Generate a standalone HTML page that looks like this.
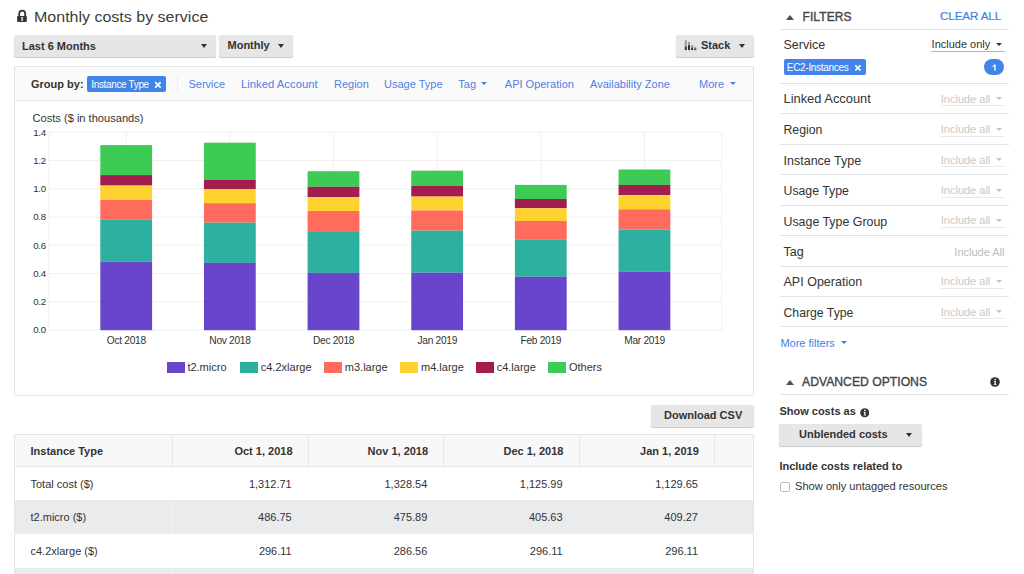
<!DOCTYPE html>
<html><head><meta charset="utf-8"><style>
html,body{margin:0;padding:0;width:1024px;height:574px;overflow:hidden;background:#fff;position:relative;font-family:"Liberation Sans",sans-serif;}
.t{position:absolute;white-space:nowrap;line-height:1;}
</style></head><body>
<svg style="position:absolute;left:0;top:0" width="40" height="30" viewBox="0 0 40 30">
<path d="M19.2 16.5 V13.7 A3.0 3.0 0 0 1 25.2 13.7 V16.5" fill="none" stroke="#333" stroke-width="1.8"/>
<rect x="17.1" y="15.9" width="9.7" height="6" rx="0.8" fill="#333"/>
<rect x="21.5" y="17.4" width="1.2" height="3.0" fill="#fff"/>
<rect x="21.1" y="17.1" width="2.0" height="0.8" fill="#fff"/>
<rect x="21.1" y="19.8" width="2.0" height="0.8" fill="#fff"/>
</svg>
<div class="t" style="left:34.00px;top:8.66px;font-size:16px;color:#3c3c3c;transform:scaleY(0.93);transform-origin:0 13.54px;">Monthly costs by service</div>
<div style="position:absolute;left:14px;top:35px;width:202px;height:22px;background:#e6e6e6;border-radius:2px;box-shadow:0 1px 1px 0 rgba(0,28,36,.22),1px 1px 1px -1px rgba(0,28,36,.08),-1px 1px 1px -1px rgba(0,28,36,.08);"></div>
<div class="t" style="left:22.00px;top:40.69px;font-size:11px;color:#333;font-weight:bold;">Last 6 Months</div>
<div style="position:absolute;left:200.5px;top:43.7px;width:0;height:0;border-left:3.5px solid transparent;border-right:3.5px solid transparent;border-top:4.3px solid #333;"></div>
<div style="position:absolute;left:219px;top:35px;width:74px;height:22px;background:#e6e6e6;border-radius:2px;box-shadow:0 1px 1px 0 rgba(0,28,36,.22),1px 1px 1px -1px rgba(0,28,36,.08),-1px 1px 1px -1px rgba(0,28,36,.08);"></div>
<div class="t" style="left:227.50px;top:40.29px;font-size:11px;color:#333;font-weight:bold;">Monthly</div>
<div style="position:absolute;left:277.6px;top:43.7px;width:0;height:0;border-left:3.5px solid transparent;border-right:3.5px solid transparent;border-top:4.3px solid #333;"></div>
<div style="position:absolute;left:676px;top:35px;width:78px;height:22px;background:#e6e6e6;border-radius:2px;box-shadow:0 1px 1px 0 rgba(0,28,36,.22),1px 1px 1px -1px rgba(0,28,36,.08),-1px 1px 1px -1px rgba(0,28,36,.08);"></div>
<svg style="position:absolute;left:680px;top:36px" width="20" height="18" viewBox="0 0 20 18">
<rect x="4.8" y="4.2" width="2" height="6.6" fill="#9a9a9a"/><rect x="4.8" y="10.6" width="2" height="3.5" fill="#333"/>
<rect x="8.0" y="6.0" width="2" height="3.2" fill="#9a9a9a"/><rect x="8.0" y="9.1" width="2" height="5" fill="#333"/>
<rect x="11.1" y="9.1" width="2" height="2.6" fill="#9a9a9a"/><rect x="11.1" y="11.6" width="2" height="2.5" fill="#333"/>
<rect x="14.2" y="10.7" width="2.1" height="1.9" fill="#a5a5a5"/><rect x="14.2" y="12.5" width="2.1" height="1.6" fill="#333"/>
</svg>
<div class="t" style="left:701.00px;top:39.99px;font-size:11px;color:#333;font-weight:bold;">Stack</div>
<div style="position:absolute;left:739.2px;top:43.9px;width:0;height:0;border-left:3.5px solid transparent;border-right:3.5px solid transparent;border-top:4.3px solid #333;"></div>
<div style="position:absolute;left:14px;top:66px;width:740px;height:330px;box-sizing:border-box;border:1px solid #e3e6e6;background:#fff;"></div>
<div style="position:absolute;left:15px;top:67px;width:738px;height:33px;background:#fafafa;border-bottom:1px solid #e6e8e8;"></div>
<div class="t" style="left:31.00px;top:78.69px;font-size:11px;color:#333;font-weight:bold;">Group by:</div>
<div style="position:absolute;left:86.8px;top:76.2px;width:79px;height:15.7px;background:#4185ea;border-radius:2px;"></div>
<div class="t" style="left:91.30px;top:79.73px;font-size:10px;color:#fff;letter-spacing:-0.35px;">Instance Type</div>
<svg style="position:absolute;left:154px;top:80.8px" width="8" height="8" viewBox="0 0 8 8"><path d="M1.2 1.2 L6.6 6.6 M6.6 1.2 L1.2 6.6" stroke="#fff" stroke-width="1.7"/></svg>
<div style="position:absolute;left:177px;top:75px;width:1px;height:18px;background:#ebeded;"></div>
<div class="t" style="left:188.50px;top:79.39px;font-size:11px;color:#5080e2;">Service</div>
<div class="t" style="left:241.00px;top:79.13px;font-size:11.3px;color:#5080e2;">Linked Account</div>
<div class="t" style="left:334.00px;top:79.39px;font-size:11px;color:#5080e2;">Region</div>
<div class="t" style="left:384.00px;top:79.39px;font-size:11px;color:#5080e2;">Usage Type</div>
<div class="t" style="left:458.30px;top:79.39px;font-size:11px;color:#5080e2;">Tag</div>
<div class="t" style="left:504.80px;top:79.39px;font-size:11px;color:#5080e2;">API Operation</div>
<div class="t" style="left:590.00px;top:79.39px;font-size:11px;color:#5080e2;">Availability Zone</div>
<div class="t" style="left:699.00px;top:79.39px;font-size:11px;color:#5080e2;">More</div>
<div style="position:absolute;left:480.5px;top:82.0px;width:0;height:0;border-left:3.0px solid transparent;border-right:3.0px solid transparent;border-top:3.9px solid #5080e2;"></div>
<div style="position:absolute;left:729.5px;top:82.0px;width:0;height:0;border-left:3.0px solid transparent;border-right:3.0px solid transparent;border-top:3.9px solid #5080e2;"></div>
<svg style="position:absolute;left:0;top:0" width="1024" height="574" viewBox="0 0 1024 574">
<rect x="48.6" y="131.70" width="673" height="1" fill="#f0f0f0"/>
<rect x="48.6" y="159.95" width="673" height="1" fill="#f0f0f0"/>
<rect x="48.6" y="188.20" width="673" height="1" fill="#f0f0f0"/>
<rect x="48.6" y="216.45" width="673" height="1" fill="#f0f0f0"/>
<rect x="48.6" y="244.70" width="673" height="1" fill="#f0f0f0"/>
<rect x="48.6" y="272.95" width="673" height="1" fill="#f0f0f0"/>
<rect x="48.6" y="301.20" width="673" height="1" fill="#f0f0f0"/>
<rect x="48.6" y="329.45" width="673" height="1" fill="#f0f0f0"/>
<rect x="48.4" y="132" width="1" height="198" fill="#f0f0f0"/>
<rect x="721.2" y="132" width="1" height="198" fill="#f0f0f0"/>
<rect x="125.80" y="132" width="1" height="198" fill="#f0f0f0"/>
<rect x="229.45" y="132" width="1" height="198" fill="#f0f0f0"/>
<rect x="333.10" y="132" width="1" height="198" fill="#f0f0f0"/>
<rect x="436.75" y="132" width="1" height="198" fill="#f0f0f0"/>
<rect x="540.40" y="132" width="1" height="198" fill="#f0f0f0"/>
<rect x="644.05" y="132" width="1" height="198" fill="#f0f0f0"/>
<rect x="100.30" y="145.10" width="51.8" height="30.00" fill="#3ecb55"/>
<rect x="100.30" y="175.10" width="51.8" height="10.50" fill="#a21d50"/>
<rect x="100.30" y="185.60" width="51.8" height="14.40" fill="#fed330"/>
<rect x="100.30" y="200.00" width="51.8" height="19.80" fill="#ff6b5d"/>
<rect x="100.30" y="219.80" width="51.8" height="41.90" fill="#2db0a0"/>
<rect x="100.30" y="261.70" width="51.8" height="68.50" fill="#6945cb"/>
<rect x="203.95" y="142.70" width="51.8" height="37.10" fill="#3ecb55"/>
<rect x="203.95" y="179.80" width="51.8" height="9.50" fill="#a21d50"/>
<rect x="203.95" y="189.30" width="51.8" height="13.90" fill="#fed330"/>
<rect x="203.95" y="203.20" width="51.8" height="19.50" fill="#ff6b5d"/>
<rect x="203.95" y="222.70" width="51.8" height="40.20" fill="#2db0a0"/>
<rect x="203.95" y="262.90" width="51.8" height="67.30" fill="#6945cb"/>
<rect x="307.60" y="171.20" width="51.8" height="15.60" fill="#3ecb55"/>
<rect x="307.60" y="186.80" width="51.8" height="10.30" fill="#a21d50"/>
<rect x="307.60" y="197.10" width="51.8" height="13.90" fill="#fed330"/>
<rect x="307.60" y="211.00" width="51.8" height="20.20" fill="#ff6b5d"/>
<rect x="307.60" y="231.20" width="51.8" height="41.70" fill="#2db0a0"/>
<rect x="307.60" y="272.90" width="51.8" height="57.30" fill="#6945cb"/>
<rect x="411.25" y="170.70" width="51.8" height="15.20" fill="#3ecb55"/>
<rect x="411.25" y="185.90" width="51.8" height="10.70" fill="#a21d50"/>
<rect x="411.25" y="196.60" width="51.8" height="13.90" fill="#fed330"/>
<rect x="411.25" y="210.50" width="51.8" height="20.20" fill="#ff6b5d"/>
<rect x="411.25" y="230.70" width="51.8" height="42.00" fill="#2db0a0"/>
<rect x="411.25" y="272.70" width="51.8" height="57.50" fill="#6945cb"/>
<rect x="514.90" y="184.90" width="51.8" height="14.10" fill="#3ecb55"/>
<rect x="514.90" y="199.00" width="51.8" height="9.30" fill="#a21d50"/>
<rect x="514.90" y="208.30" width="51.8" height="12.70" fill="#fed330"/>
<rect x="514.90" y="221.00" width="51.8" height="18.30" fill="#ff6b5d"/>
<rect x="514.90" y="239.30" width="51.8" height="37.50" fill="#2db0a0"/>
<rect x="514.90" y="276.80" width="51.8" height="53.40" fill="#6945cb"/>
<rect x="618.55" y="169.50" width="51.8" height="15.40" fill="#3ecb55"/>
<rect x="618.55" y="184.90" width="51.8" height="10.20" fill="#a21d50"/>
<rect x="618.55" y="195.10" width="51.8" height="14.20" fill="#fed330"/>
<rect x="618.55" y="209.30" width="51.8" height="20.20" fill="#ff6b5d"/>
<rect x="618.55" y="229.50" width="51.8" height="42.00" fill="#2db0a0"/>
<rect x="618.55" y="271.50" width="51.8" height="58.70" fill="#6945cb"/>
</svg>
<div class="t" style="left:32.50px;top:112.50px;font-size:11.1px;color:#333;">Costs ($ in thousands)</div>
<div class="t" style="left:33.20px;top:127.74px;font-size:9.7px;color:#333;letter-spacing:-0.3px;">1.4</div>
<div class="t" style="left:33.20px;top:155.99px;font-size:9.7px;color:#333;letter-spacing:-0.3px;">1.2</div>
<div class="t" style="left:33.20px;top:184.24px;font-size:9.7px;color:#333;letter-spacing:-0.3px;">1.0</div>
<div class="t" style="left:33.20px;top:212.49px;font-size:9.7px;color:#333;letter-spacing:-0.3px;">0.8</div>
<div class="t" style="left:33.20px;top:240.74px;font-size:9.7px;color:#333;letter-spacing:-0.3px;">0.6</div>
<div class="t" style="left:33.20px;top:268.99px;font-size:9.7px;color:#333;letter-spacing:-0.3px;">0.4</div>
<div class="t" style="left:33.20px;top:297.24px;font-size:9.7px;color:#333;letter-spacing:-0.3px;">0.2</div>
<div class="t" style="left:33.20px;top:325.49px;font-size:9.7px;color:#333;letter-spacing:-0.3px;">0.0</div>
<div class="t" style="left:76.30px;width:100px;text-align:center;top:336.17px;font-size:10.2px;letter-spacing:-0.3px;color:#333">Oct 2018</div>
<div class="t" style="left:179.95px;width:100px;text-align:center;top:336.17px;font-size:10.2px;letter-spacing:-0.3px;color:#333">Nov 2018</div>
<div class="t" style="left:283.60px;width:100px;text-align:center;top:336.17px;font-size:10.2px;letter-spacing:-0.3px;color:#333">Dec 2018</div>
<div class="t" style="left:387.25px;width:100px;text-align:center;top:336.17px;font-size:10.2px;letter-spacing:-0.3px;color:#333">Jan 2019</div>
<div class="t" style="left:490.90px;width:100px;text-align:center;top:336.17px;font-size:10.2px;letter-spacing:-0.3px;color:#333">Feb 2019</div>
<div class="t" style="left:594.55px;width:100px;text-align:center;top:336.17px;font-size:10.2px;letter-spacing:-0.3px;color:#333">Mar 2019</div>
<div style="position:absolute;left:166.8px;top:361.6px;width:17.8px;height:11.5px;background:#6945cb;"></div>
<div class="t" style="left:187.40px;top:361.99px;font-size:11px;color:#333;">t2.micro</div>
<div style="position:absolute;left:240.20000000000002px;top:361.6px;width:17.8px;height:11.5px;background:#2db0a0;"></div>
<div class="t" style="left:260.80px;top:361.99px;font-size:11px;color:#333;">c4.2xlarge</div>
<div style="position:absolute;left:324.2px;top:361.6px;width:17.8px;height:11.5px;background:#ff6b5d;"></div>
<div class="t" style="left:344.80px;top:361.99px;font-size:11px;color:#333;">m3.large</div>
<div style="position:absolute;left:400.4px;top:361.6px;width:17.8px;height:11.5px;background:#fed330;"></div>
<div class="t" style="left:421.00px;top:361.99px;font-size:11px;color:#333;">m4.large</div>
<div style="position:absolute;left:476.09999999999997px;top:361.6px;width:17.8px;height:11.5px;background:#a21d50;"></div>
<div class="t" style="left:496.70px;top:361.99px;font-size:11px;color:#333;">c4.large</div>
<div style="position:absolute;left:548.4px;top:361.6px;width:17.8px;height:11.5px;background:#3ecb55;"></div>
<div class="t" style="left:569.00px;top:361.99px;font-size:11px;color:#333;">Others</div>
<div style="position:absolute;left:651px;top:405px;width:103px;height:21.5px;background:#e6e6e6;border-radius:2px;box-shadow:0 1px 1px 0 rgba(0,28,36,.22),1px 1px 1px -1px rgba(0,28,36,.08),-1px 1px 1px -1px rgba(0,28,36,.08);"></div>
<div class="t" style="left:664.00px;top:410.39px;font-size:11px;color:#333;font-weight:bold;">Download CSV</div>
<div style="position:absolute;left:14px;top:434px;width:740px;height:140px;box-sizing:border-box;border:1px solid #e3e6e6;border-bottom:none;background:#fff;"></div>
<div style="position:absolute;left:15px;top:435px;width:738px;height:31px;background:#f8f8f8;border-bottom:1px solid #e6e8e8;"></div>
<div style="position:absolute;left:15px;top:500.3px;width:738px;height:33.7px;background:#e9ebed;"></div>
<div style="position:absolute;left:15px;top:567.5px;width:738px;height:7px;background:#e9ebed;"></div>
<div style="position:absolute;left:172px;top:500.3px;width:1px;height:33.7px;background:#f2f4f4;"></div>
<div style="position:absolute;left:172px;top:567.5px;width:1px;height:7px;background:#f2f4f4;"></div>
<div style="position:absolute;left:172px;top:435px;width:1px;height:31px;background:#e6e8e8;"></div>
<div style="position:absolute;left:308px;top:435px;width:1px;height:31px;background:#e6e8e8;"></div>
<div style="position:absolute;left:443.3px;top:435px;width:1px;height:31px;background:#e6e8e8;"></div>
<div style="position:absolute;left:578.8px;top:435px;width:1px;height:31px;background:#e6e8e8;"></div>
<div style="position:absolute;left:714px;top:435px;width:1px;height:31px;background:#e6e8e8;"></div>
<div class="t" style="left:30.50px;top:445.69px;font-size:11px;color:#333;font-weight:bold;">Instance Type</div>
<div class="t" style="right:731.50px;top:446.09px;font-size:11px;color:#333;font-weight:bold;">Oct 1, 2018</div>
<div class="t" style="right:595.90px;top:446.09px;font-size:11px;color:#333;font-weight:bold;">Nov 1, 2018</div>
<div class="t" style="right:460.60px;top:446.09px;font-size:11px;color:#333;font-weight:bold;">Dec 1, 2018</div>
<div class="t" style="right:325.20px;top:446.09px;font-size:11px;color:#333;font-weight:bold;">Jan 1, 2019</div>
<div class="t" style="left:30.50px;top:478.79px;font-size:11px;color:#333;">Total cost ($)</div>
<div class="t" style="right:732.30px;top:478.79px;font-size:11px;color:#333;">1,312.71</div>
<div class="t" style="right:596.70px;top:478.79px;font-size:11px;color:#333;">1,328.54</div>
<div class="t" style="right:461.40px;top:478.79px;font-size:11px;color:#333;">1,125.99</div>
<div class="t" style="right:326.00px;top:478.79px;font-size:11px;color:#333;">1,129.65</div>
<div class="t" style="left:30.50px;top:512.49px;font-size:11px;color:#333;">t2.micro ($)</div>
<div class="t" style="right:732.30px;top:512.49px;font-size:11px;color:#333;">486.75</div>
<div class="t" style="right:596.70px;top:512.49px;font-size:11px;color:#333;">475.89</div>
<div class="t" style="right:461.40px;top:512.49px;font-size:11px;color:#333;">405.63</div>
<div class="t" style="right:326.00px;top:512.49px;font-size:11px;color:#333;">409.27</div>
<div class="t" style="left:30.50px;top:546.19px;font-size:11px;color:#333;">c4.2xlarge ($)</div>
<div class="t" style="right:732.30px;top:546.19px;font-size:11px;color:#333;">296.11</div>
<div class="t" style="right:596.70px;top:546.19px;font-size:11px;color:#333;">286.56</div>
<div class="t" style="right:461.40px;top:546.19px;font-size:11px;color:#333;">296.11</div>
<div class="t" style="right:326.00px;top:546.19px;font-size:11px;color:#333;">296.11</div>
<div style="position:absolute;left:786.2px;top:14.6px;width:0;height:0;border-left:4.7px solid transparent;border-right:4.7px solid transparent;border-bottom:5.4px solid #4a4f55;"></div>
<div class="t" style="left:802.50px;top:10.84px;font-size:12px;color:#3f454b;letter-spacing:0.1px;-webkit-text-stroke:0.35px #3f454b;">FILTERS</div>
<div class="t" style="right:23.00px;top:10.28px;font-size:11.6px;color:#3b7fe6;letter-spacing:-0.1px;-webkit-text-stroke:0.2px #3b7fe6;">CLEAR ALL</div>
<div style="position:absolute;left:779.5px;top:29px;width:229.5px;height:1px;background:#dfe3e3;"></div>
<div class="t" style="left:783.50px;top:38.84px;font-size:12.47px;color:#333;">Service</div>
<div class="t" style="right:33.70px;top:39.09px;font-size:11px;color:#333;">Include only</div>
<div style="position:absolute;left:995.8px;top:43.2px;width:0;height:0;border-left:3.5px solid transparent;border-right:3.5px solid transparent;border-top:3.8px solid #333;"></div>
<div style="position:absolute;left:931px;top:51px;width:73.5px;height:1px;background:#b5b5b5;"></div>
<div style="position:absolute;left:784px;top:59.2px;width:82px;height:15.6px;background:#4185ea;border-radius:2px;"></div>
<div class="t" style="left:786.80px;top:62.73px;font-size:10px;color:#fff;letter-spacing:-0.3px;">EC2-Instances</div>
<svg style="position:absolute;left:854px;top:63.8px" width="8" height="8" viewBox="0 0 8 8"><path d="M1.3 1.3 L6.5 6.5 M6.5 1.3 L1.3 6.5" stroke="#fff" stroke-width="1.7"/></svg>
<div style="position:absolute;left:983.6px;top:59.2px;width:20.6px;height:15.6px;background:#4185ea;border-radius:8px;"></div>
<svg style="position:absolute;left:990px;top:62px" width="8" height="10" viewBox="0 0 8 10"><path d="M4.3 2.6 H5.7 V8.7 H4.3 V4.3 Q3.6 4.9 2.5 5.0 V3.9 Q3.9 3.6 4.3 2.6 Z" fill="#fff"/></svg>
<div style="position:absolute;left:779.5px;top:82.7px;width:229.5px;height:1px;background:#dfe3e3;"></div>
<div style="position:absolute;left:779.5px;top:113.1px;width:229.5px;height:1px;background:#dfe3e3;"></div>
<div style="position:absolute;left:779.5px;top:143.8px;width:229.5px;height:1px;background:#dfe3e3;"></div>
<div style="position:absolute;left:779.5px;top:174.2px;width:229.5px;height:1px;background:#dfe3e3;"></div>
<div style="position:absolute;left:779.5px;top:204.6px;width:229.5px;height:1px;background:#dfe3e3;"></div>
<div style="position:absolute;left:779.5px;top:235.1px;width:229.5px;height:1px;background:#dfe3e3;"></div>
<div style="position:absolute;left:779.5px;top:265.5px;width:229.5px;height:1px;background:#dfe3e3;"></div>
<div style="position:absolute;left:779.5px;top:295.9px;width:229.5px;height:1px;background:#dfe3e3;"></div>
<div style="position:absolute;left:779.5px;top:326.4px;width:229.5px;height:1px;background:#dfe3e3;"></div>
<div class="t" style="left:783.50px;top:93.20px;font-size:12.88px;color:#333;">Linked Account</div>
<div class="t" style="right:33.70px;top:93.59px;font-size:11px;color:#c8c8c8;">Include all</div>
<div style="position:absolute;left:996px;top:97.1px;width:0;height:0;border-left:3.0px solid transparent;border-right:3.0px solid transparent;border-top:3.2px solid #c4c4c4;"></div>
<div style="position:absolute;left:940.7px;top:105.2px;width:63.7px;height:1px;background:#e8e8e8;"></div>
<div class="t" style="left:783.50px;top:124.11px;font-size:12.27px;color:#333;">Region</div>
<div class="t" style="right:33.70px;top:123.99px;font-size:11px;color:#c8c8c8;">Include all</div>
<div style="position:absolute;left:996px;top:127.5px;width:0;height:0;border-left:3.0px solid transparent;border-right:3.0px solid transparent;border-top:3.2px solid #c4c4c4;"></div>
<div style="position:absolute;left:940.7px;top:135.6px;width:63.7px;height:1px;background:#e8e8e8;"></div>
<div class="t" style="left:783.50px;top:154.59px;font-size:12.53px;color:#333;">Instance Type</div>
<div class="t" style="right:33.70px;top:154.69px;font-size:11px;color:#c8c8c8;">Include all</div>
<div style="position:absolute;left:996px;top:158.20000000000002px;width:0;height:0;border-left:3.0px solid transparent;border-right:3.0px solid transparent;border-top:3.2px solid #c4c4c4;"></div>
<div style="position:absolute;left:940.7px;top:166.3px;width:63.7px;height:1px;background:#e8e8e8;"></div>
<div class="t" style="left:783.50px;top:185.18px;font-size:12.31px;color:#333;">Usage Type</div>
<div class="t" style="right:33.70px;top:185.09px;font-size:11px;color:#c8c8c8;">Include all</div>
<div style="position:absolute;left:996px;top:188.6px;width:0;height:0;border-left:3.0px solid transparent;border-right:3.0px solid transparent;border-top:3.2px solid #c4c4c4;"></div>
<div style="position:absolute;left:940.7px;top:196.7px;width:63.7px;height:1px;background:#e8e8e8;"></div>
<div class="t" style="left:783.50px;top:215.51px;font-size:12.39px;color:#333;">Usage Type Group</div>
<div class="t" style="right:33.70px;top:215.49px;font-size:11px;color:#c8c8c8;">Include all</div>
<div style="position:absolute;left:996px;top:219.0px;width:0;height:0;border-left:3.0px solid transparent;border-right:3.0px solid transparent;border-top:3.2px solid #c4c4c4;"></div>
<div style="position:absolute;left:940.7px;top:227.1px;width:63.7px;height:1px;background:#e8e8e8;"></div>
<div class="t" style="left:783.50px;top:245.92px;font-size:12.5px;color:#333;">Tag</div>
<div class="t" style="right:19.50px;top:246.59px;font-size:11px;color:#bbb;">Include All</div>
<div class="t" style="left:783.50px;top:276.30px;font-size:12.52px;color:#333;">API Operation</div>
<div class="t" style="right:33.70px;top:276.39px;font-size:11px;color:#c8c8c8;">Include all</div>
<div style="position:absolute;left:996px;top:279.90000000000003px;width:0;height:0;border-left:3.0px solid transparent;border-right:3.0px solid transparent;border-top:3.2px solid #c4c4c4;"></div>
<div style="position:absolute;left:940.7px;top:288.0px;width:63.7px;height:1px;background:#e8e8e8;"></div>
<div class="t" style="left:783.50px;top:306.92px;font-size:12.26px;color:#333;">Charge Type</div>
<div class="t" style="right:33.70px;top:306.79px;font-size:11px;color:#c8c8c8;">Include all</div>
<div style="position:absolute;left:996px;top:310.3px;width:0;height:0;border-left:3.0px solid transparent;border-right:3.0px solid transparent;border-top:3.2px solid #c4c4c4;"></div>
<div style="position:absolute;left:940.7px;top:318.4px;width:63.7px;height:1px;background:#e8e8e8;"></div>
<div class="t" style="left:780.40px;top:337.59px;font-size:11px;color:#3b7fe6;">More filters</div>
<div style="position:absolute;left:840.7px;top:341.3px;width:0;height:0;border-left:3.3px solid transparent;border-right:3.3px solid transparent;border-top:3.6px solid #3b7fe6;"></div>
<div style="position:absolute;left:786.1px;top:379.8px;width:0;height:0;border-left:4.7px solid transparent;border-right:4.7px solid transparent;border-bottom:5.4px solid #4a4f55;"></div>
<div class="t" style="left:802.00px;top:375.67px;font-size:12.2px;color:#3f454b;-webkit-text-stroke:0.35px #3f454b;">ADVANCED OPTIONS</div>
<svg style="position:absolute;left:990px;top:377px" width="10" height="10" viewBox="0 0 10 10"><circle cx="5" cy="5" r="4.8" fill="#333"/><circle cx="5.2" cy="2.5" r="0.85" fill="#fff"/><path d="M3.9 4.0 H5.8 V7.2 H6.4 V8.0 H3.8 V7.2 H4.5 V4.7 H3.9 Z" fill="#fff"/></svg>
<div style="position:absolute;left:779.5px;top:394px;width:229.5px;height:1px;background:#dfe3e3;"></div>
<div class="t" style="left:779.40px;top:406.09px;font-size:11px;color:#333;font-weight:bold;">Show costs as</div>
<svg style="position:absolute;left:859.8px;top:408.2px" width="9.5" height="9.5" viewBox="0 0 10 10"><circle cx="5" cy="5" r="4.8" fill="#333"/><circle cx="5.2" cy="2.5" r="0.85" fill="#fff"/><path d="M3.9 4.0 H5.8 V7.2 H6.4 V8.0 H3.8 V7.2 H4.5 V4.7 H3.9 Z" fill="#fff"/></svg>
<div style="position:absolute;left:779.4px;top:423.6px;width:142.4px;height:22px;background:#e6e6e6;border-radius:2px;box-shadow:0 1px 1px 0 rgba(0,28,36,.22),1px 1px 1px -1px rgba(0,28,36,.08),-1px 1px 1px -1px rgba(0,28,36,.08);"></div>
<div class="t" style="left:799.00px;top:429.09px;font-size:11px;color:#333;font-weight:bold;">Unblended costs</div>
<div style="position:absolute;left:906.4px;top:432.8px;width:0;height:0;border-left:3.5px solid transparent;border-right:3.5px solid transparent;border-top:4.3px solid #333;"></div>
<div class="t" style="left:779.40px;top:460.69px;font-size:11px;color:#333;font-weight:bold;">Include costs related to</div>
<div style="position:absolute;left:780px;top:482px;width:10px;height:10px;box-sizing:border-box;border:1px solid #bbb;border-radius:2px;background:#fff;"></div>
<div class="t" style="left:795.00px;top:481.19px;font-size:11.12px;color:#333;">Show only untagged resources</div>
</body></html>
